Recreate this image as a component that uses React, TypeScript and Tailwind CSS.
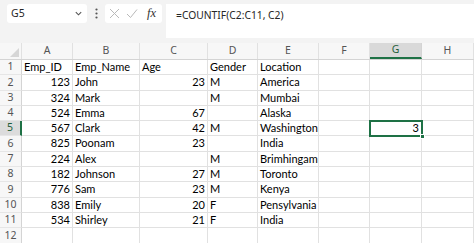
import React from "react";

const cols = [51, 67, 68, 50, 61, 51, 52, 52];
const letters = ["A", "B", "C", "D", "E", "F", "G", "H"];

type Cell = string | number | "";
const rows: Cell[][] = [
  ["Emp_ID", "Emp_Name", "Age", "Gender", "Location"],
  [123, "John", 23, "M", "America"],
  [324, "Mark", "", "M", "Mumbai"],
  [524, "Emma", 67, "", "Alaska"],
  [567, "Clark", 42, "M", "Washington", "", 3],
  [825, "Poonam", 23, "", "India"],
  [224, "Alex", "", "M", "Brimhingam"],
  [182, "Johnson", 27, "M", "Toronto"],
  [776, "Sam", 23, "M", "Kenya"],
  [838, "Emily", 20, "F", "Pensylvania"],
  [534, "Shirley", 21, "F", "India"],
  [],
];

const cellFont = { fontFamily: "Lato, 'Liberation Sans', sans-serif" };
const uiFont = { fontFamily: "'Noto Sans', 'Open Sans', sans-serif" };

export default function App() {
  return (
    <div className="w-[474px] h-[243px] overflow-hidden bg-white relative">
      {/* Top bar: name box + formula bar */}
      <div className="h-[43px] bg-[#f3f3f3] flex items-start pt-[4px] pl-[7px]" style={uiFont}>
        <div className="w-[80px] h-[19px] bg-white rounded-[3px] flex items-center justify-between pl-[4px] pr-[4px] text-[10.5px] text-[#262626]">
          <span>G5</span>
          <svg width="9" height="9" viewBox="0 0 10 10" fill="none" stroke="#555" strokeWidth="1.2">
            <path d="M2 3.5 L5 6.5 L8 3.5" />
          </svg>
        </div>
        <div className="w-[18px] h-[19px] flex items-center justify-center">
          <svg width="3" height="11" viewBox="0 0 3 11" fill="#555">
            <circle cx="1.5" cy="1.5" r="1.1" />
            <circle cx="1.5" cy="5.5" r="1.1" />
            <circle cx="1.5" cy="9.5" r="1.1" />
          </svg>
        </div>
        <div className="w-[57px] h-[19px] bg-white rounded-[3px] flex items-center pl-[4px] gap-[6px]">
          <svg width="11" height="11" viewBox="0 0 11 11" fill="none" stroke="#b9b9b9" strokeWidth="1">
            <path d="M1 1 L10 10 M10 1 L1 10" />
          </svg>
          <svg width="12" height="11" viewBox="0 0 12 11" fill="none" stroke="#b9b9b9" strokeWidth="1">
            <path d="M1 6 L4.5 9.5 L11 1.5" />
          </svg>
          <span
            className="ml-[3px] text-[12.5px] italic text-[#333] leading-none"
            style={{ fontFamily: "'Liberation Serif', 'DejaVu Serif', serif" }}
          >
            fx
          </span>
        </div>
        <div className="ml-[4px] flex-1 h-[34px] bg-white pl-[10px] pt-[2px] text-[10.3px] text-[#262626] leading-[18px]">
          =COUNTIF(C2:C11, C2)
        </div>
      </div>

      {/* Column headers */}
      <div className="flex h-[17px] bg-[#f7f7f7] border-b border-[#d4d4d4]" style={uiFont}>
        <div className="w-[22px] shrink-0 relative border-r border-[#e1e1e1]">
          <svg className="absolute right-[2px] bottom-[2px]" width="9" height="9" viewBox="0 0 9 9">
            <path d="M9 0 L9 9 L0 9 Z" fill="#d6d6d6" />
          </svg>
        </div>
        {letters.map((l, i) => (
          <div
            key={l}
            style={{ width: cols[i] }}
            className={`shrink-0 flex items-center justify-center text-[10.5px] border-r ${
              l === "G"
                ? "bg-[#d9d9d9] text-[#1e5e3a] border-b-2 border-b-[#1e7145] border-r-[#d4d4d4]"
                : "text-[#555] border-[#e1e1e1]"
            }`}
          >
            {l}
          </div>
        ))}
      </div>

      {/* Rows */}
      {rows.map((r, ri) => (
        <div key={ri} className="flex h-[15.3px]">
          <div
            style={uiFont}
            className={`w-[22px] shrink-0 flex items-center justify-center text-[10.5px] border-b border-[#e6e6e6] ${
              ri === 4
                ? "bg-[#dcdcdc] text-[#1e5e3a] border-r-2 border-r-[#1e7145]"
                : "bg-[#f7f7f7] text-[#555] border-r border-r-[#d4d4d4]"
            }`}
          >
            {ri + 1}
          </div>
          {cols.map((w, ci) => {
            const v = r[ci];
            const isNum = typeof v === "number";
            return (
              <div
                key={ci}
                style={{ width: w, ...cellFont }}
                className={`shrink-0 flex items-center overflow-visible whitespace-nowrap text-[11px] text-black border-r border-b border-[#e1e1e1] ${
                  isNum ? "justify-end pr-[2px]" : "justify-start pl-[2px]"
                }`}
              >
                {v === undefined ? "" : String(v)}
              </div>
            );
          })}
        </div>
      ))}

      {/* Selected cell G5 */}
      <div className="absolute left-[369px] top-[120px] w-[54px] h-[17px] border-2 border-[#1e7145] pointer-events-none">
        <div className="absolute -right-[4px] -bottom-[4px] w-[5px] h-[5px] bg-[#1e7145] border border-white" />
      </div>
    </div>
  );
}
